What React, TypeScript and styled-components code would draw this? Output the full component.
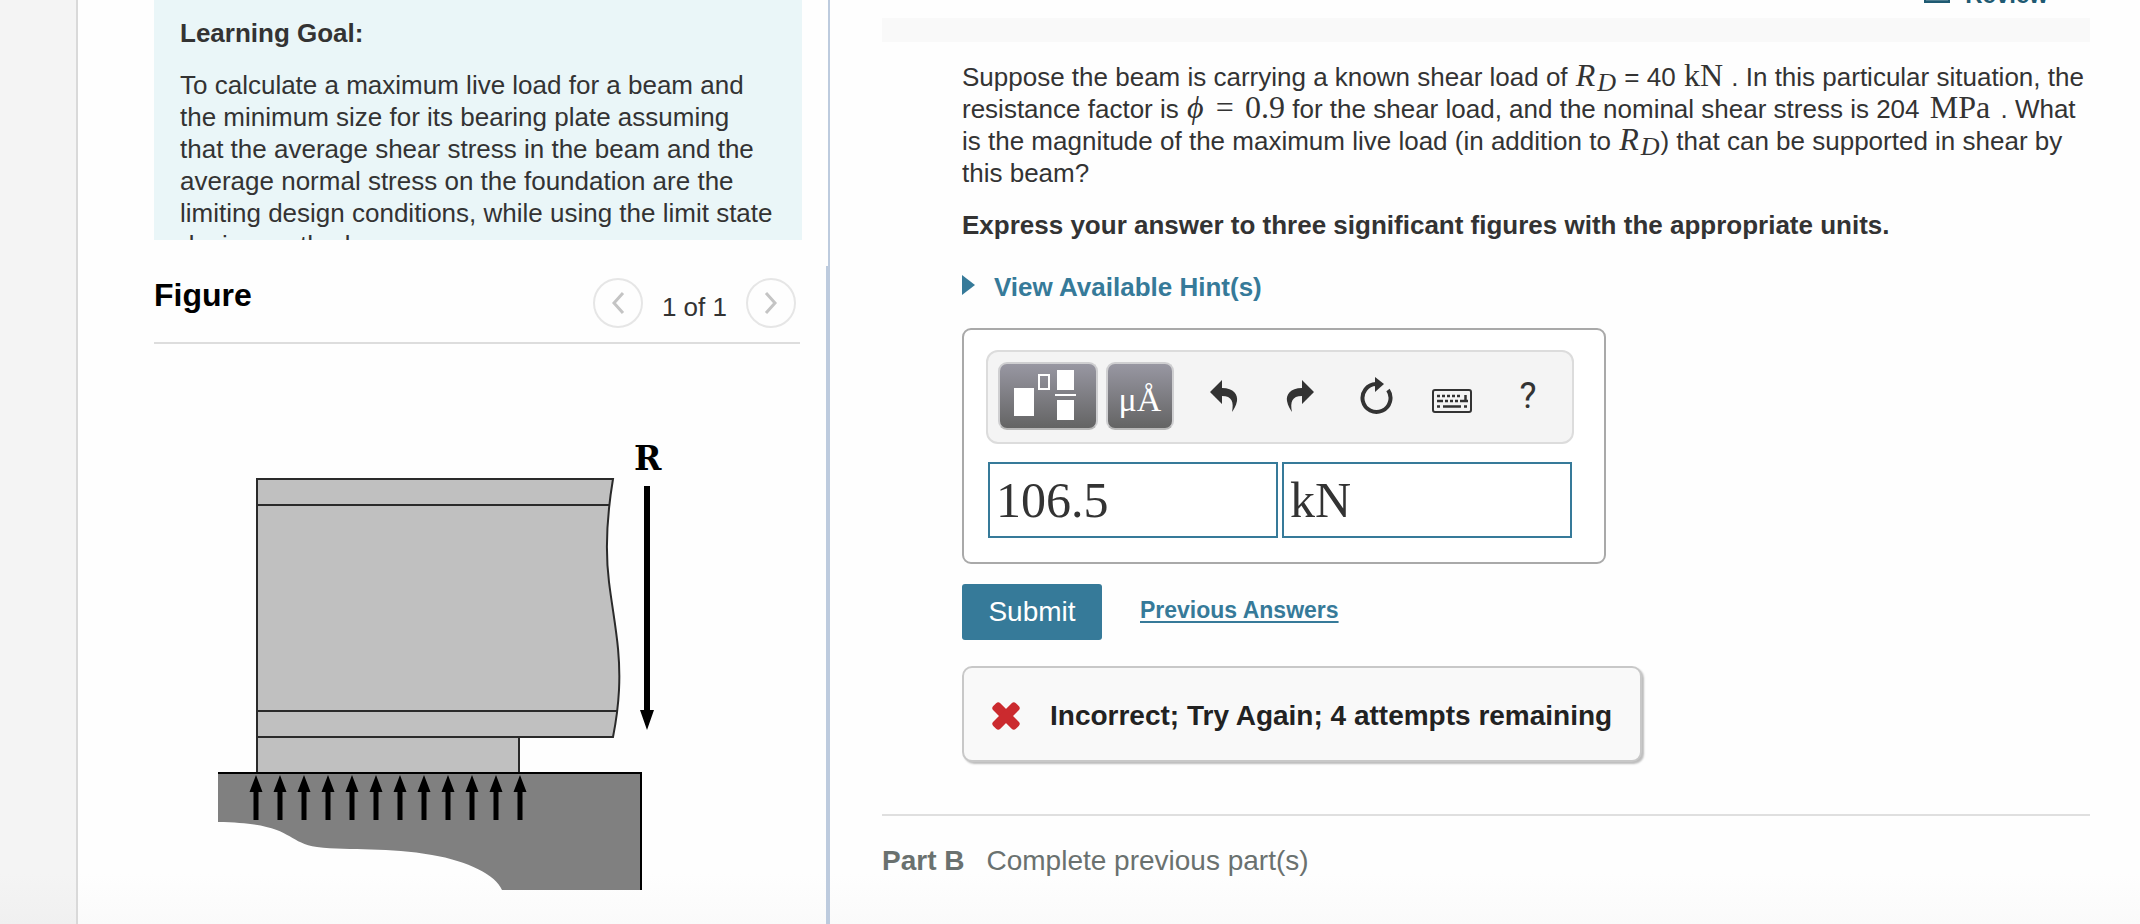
import React, { useState } from 'react';
import styled, { createGlobalStyle } from 'styled-components';

const sans = '"Liberation Sans", Arial, Helvetica, sans-serif';
const serif = '"Liberation Serif", "Times New Roman", serif';
const teal = '#367a99';
const ink = '#333333';
const divider = '#bdcbde';

const GlobalStyle = createGlobalStyle`
  *, *::before, *::after { box-sizing: border-box; }
  html, body { margin: 0; height: 100%; overflow: hidden; }
  body { background: #fefefe; color: ${ink}; font: 26px/32px ${sans}; }
  #root { height: 100%; }
  p, h2, h3 { margin: 0; }
  button { font: inherit; cursor: pointer; }
`;

const Page = styled.div`
  display: flex;
  height: 100vh;
  background: linear-gradient(to top, #fafafa, #fefefe 50px);
`;

const Gutter = styled.div`
  flex: 0 0 78px;
  background: rgba(0, 0, 0, 0.04);
  border-right: 2px solid #d9d9d9;
`;

const LeftPane = styled.aside`
  flex: 0 0 752px;
  display: flex;
  flex-direction: column;
  overflow: hidden;
`;

const GoalArea = styled.div`
  flex: 0 0 266px;
  padding: 0 26px 0 76px;
  border-right: 2px solid ${divider};
`;

const GoalBox = styled.section`
  height: 240px;
  padding: 17px 26px 0;
  overflow: hidden;
  background: #eaf6f8;
`;

const Heading = styled.h2`
  margin-bottom: 20px;
  font-size: 26px;
  line-height: 32px;
`;

const FigureArea = styled.section`
  flex: 1;
  padding: 12px 26px 0 76px;
  border-right: 4px solid ${divider};
`;

const FigureHeader = styled.header`
  display: flex;
  justify-content: space-between;
  height: 66px;
  padding-right: 4px;
  border-bottom: 2px solid #dddddd;
`;

const FigureTitle = styled.h2`
  color: #000;
  font-size: 32px;
  line-height: 34px;
`;

const Pager = styled.nav`
  display: flex;
  gap: 19px;
  height: 50px;
`;

const PagerLabel = styled.span`
  padding-top: 13px;
`;

const PagerButton = styled.button`
  display: grid;
  place-items: center;
  width: 50px;
  height: 50px;
  padding: 0;
  border: 2px solid #e6e6e6;
  border-radius: 50%;
  background: transparent;
`;

const Drawing = styled.svg`
  display: block;
  width: 448px;
  height: 460px;
  margin: 86px 0 0 64px;
`;

const RightPane = styled.main`
  flex: 1;
  min-width: 0;
  padding: 0 50px 0 52px;
`;

const TopBar = styled.div`
  display: flex;
  justify-content: flex-end;
  height: 18px;
  padding-right: 42px;
  overflow: hidden;
`;

const ReviewLink = styled.a`
  display: flex;
  gap: 15px;
  margin-top: -21px;
  height: 32px;
  color: #1f5a72;
  font-size: 24px;
  font-weight: bold;
  text-decoration: none;
`;

const Band = styled.div`
  height: 24px;
  background: #f9f9f9;
`;

const Problem = styled.div`
  display: flex;
  flex-direction: column;
  align-items: flex-start;
  padding: 19px 0 52px 80px;
  border-bottom: 2px solid #dfdfdf;
`;

const Statement = styled.p`
  margin-bottom: 20px;
`;

const Instruction = styled.p`
  margin-bottom: 30px;
  font-weight: bold;
`;

const MathText = styled.span<{ $italic?: boolean; $space?: number }>`
  margin: 0 ${(p) => p.$space ?? 0}px;
  font-family: ${serif};
  font-size: 32px;
  line-height: 0;
  font-style: ${(p) => (p.$italic ? 'italic' : 'normal')};
`;

const Subscript = styled.sub`
  margin-left: 2px;
  font-size: 26px;
  line-height: 0;
  vertical-align: -5px;
`;

const HintButton = styled.button`
  display: flex;
  align-items: center;
  gap: 19px;
  margin-bottom: 25px;
  padding: 0;
  border: 0;
  background: none;
  color: ${teal};
  font-weight: bold;
`;

const HintArrow = styled.span`
  margin-top: -4px;
  border: solid transparent;
  border-width: 10px 0 10px 13px;
  border-left-color: ${teal};
`;

const AnswerBox = styled.form`
  width: 644px;
  margin-bottom: 20px;
  padding: 20px 30px 24px 22px;
  border: 2px solid #a9a9a9;
  border-radius: 9px;
  background: #fff;
`;

const Toolbar = styled.div`
  display: flex;
  align-items: center;
  height: 94px;
  margin-bottom: 18px;
  padding: 0 6px 2px 10px;
  border: 2px solid #dcdcdc;
  border-radius: 12px;
  background: #f4f4f4;
`;

const PaletteButton = styled.button<{ $wide?: boolean }>`
  display: grid;
  place-items: center;
  width: ${(p) => (p.$wide ? 100 : 68)}px;
  height: 68px;
  margin-right: ${(p) => (p.$wide ? 8 : 12)}px;
  padding: 0;
  border: 2px solid #cfcfd1;
  border-bottom-color: #b9b9b9;
  border-radius: 9px;
  background: linear-gradient(#9897a2, #646464);
  color: #fff;
`;

const UnitGlyphs = styled.span`
  padding-top: 8px;
  font: 34px/40px ${serif};
`;

const ToolButton = styled.button`
  display: grid;
  place-items: center;
  flex: 1;
  height: 68px;
  padding: 0;
  border: 0;
  background: none;
  color: ${ink};
`;

const HelpButton = styled(ToolButton)`
  font-family: Roboto, sans-serif;
  font-size: 36px;
`;

const Fields = styled.div`
  display: grid;
  grid-template-columns: 1fr 1fr;
  gap: 4px;
  padding: 0 2px;
`;

const Field = styled.input`
  width: 100%;
  min-width: 0;
  height: 76px;
  padding: 0 0 0 6px;
  border: 2px solid ${teal};
  border-radius: 0;
  background: #fff;
  color: ${ink};
  font: 50px/70px ${serif};
  outline: none;
`;

const Actions = styled.div`
  display: flex;
  align-items: center;
  gap: 38px;
  margin-bottom: 26px;
`;

const SubmitButton = styled.button`
  width: 140px;
  height: 56px;
  padding: 0;
  border: 0;
  border-radius: 3px;
  background: ${teal};
  color: #fff;
  font-size: 28px;
`;

const AnswersLink = styled.a`
  margin-bottom: 4px;
  color: ${teal};
  font-size: 23px;
  font-weight: bold;
  text-decoration-thickness: 2px;
  text-underline-offset: 3px;
`;

const Feedback = styled.div`
  display: flex;
  align-items: center;
  gap: 30px;
  height: 96px;
  padding: 4px 28px 0;
  border: 2px solid #c8c8c8;
  border-radius: 10px;
  background: #f9f9f9;
  box-shadow: 2px 2px 2px #bdbdbd;
  color: #222;
  font-size: 28px;
  font-weight: bold;
`;

const NextPart = styled.section`
  display: flex;
  gap: 22px;
  padding-top: 28px;
  color: #6a716f;
  font-size: 28px;
  line-height: 34px;
`;

const NextTitle = styled.h3`
  font-size: 28px;
`;

function Chevron({ flip }: { flip?: boolean }) {
  return (
    <svg width="14" height="24" viewBox="0 0 14 24" fill="none" stroke="#c4c4c4" strokeWidth="3">
      <path d={flip ? 'M2 2l9 10-9 10' : 'M12 2L3 12l9 10'} />
    </svg>
  );
}

function BeamFigure() {
  const arrows = Array.from({ length: 12 }, (_, i) => 256 + i * 24);
  return (
    <Drawing viewBox="218 430 448 460" role="img" aria-label="Beam resting on a bearing plate">
      <path
        d="M218 773H641V890H502C496 875 468 861 432 855C390 847 350 851 317 847C284 842 294 823 218 822Z"
        fill="#808080"
      />
      <path
        d="M257 479H613C607 515 605 550 609 582C614 622 621 650 619 690C618 710 616 722 613 737H257Z"
        fill="#c0c0c0"
      />
      <path d="M257 737H519V773H257Z" fill="#c0c0c0" />
      <g fill="none" stroke="#2a2a2a" strokeWidth="2">
        <path d="M257 773V479H613C607 515 605 550 609 582C614 622 621 650 619 690C618 710 616 722 613 737H257" />
        <path d="M257 505H609M257 711H617M519 737V773" />
        <path d="M218 773H641V890" stroke="#000" />
      </g>
      {arrows.map((x) => (
        <path key={x} d={`M${x} 775l6.500 17h-4v28h-5v-28h-4z`} fill="#000" />
      ))}
      <path d="M644 486h6v224h4l-7 20l-7-20h4z" fill="#000" />
      <text x="634" y="470" fontFamily='"DejaVu Serif", serif' fontSize="33" fontWeight="bold">
        R
      </text>
    </Drawing>
  );
}

function TemplateIcon() {
  return (
    <svg width="68" height="52" viewBox="0 0 68 52" fill="#fff">
      <path d="M0 18h20v28H0zM43 0h17v20H43zM43 30h17v20H43zM41 24h21v2H41z" />
      <path d="M25 5h10v14H25z" fill="none" stroke="#fff" strokeWidth="2" />
    </svg>
  );
}

function ArrowIcon({ flip }: { flip?: boolean }) {
  return (
    <svg width="28" height="32" viewBox="0 0 28 32" fill="currentColor">
      <path
        transform={flip ? 'matrix(-1 0 0 1 28 0)' : undefined}
        d="M0 12L12 0V8C24 8 28 15 27 21C26 26 24 29 22 32C24 22 22 16 12 16V24Z"
      />
    </svg>
  );
}

function ResetIcon() {
  return (
    <svg width="34" height="38" viewBox="0 0 34 38">
      <path d="M17 7a14 14 0 1 0 12 6" fill="none" stroke="currentColor" strokeWidth="4" />
      <path d="M16 0l9 7-9 8z" fill="currentColor" />
    </svg>
  );
}

function KeyboardIcon() {
  return (
    <svg width="40" height="34" viewBox="0 -10 40 34" fill="none" stroke="currentColor">
      <rect x="1" y="1" width="38" height="22" rx="2" strokeWidth="2" />
      <path
        d="M5 7h3m2 0h3m2 0h3m2 0h3m2 0h3M5 12h6m2 0h3m2 0h3m2 0h3m2 0h8M33.500 6v7M5 17.500h3m3 0h18m3 0h3"
        strokeWidth="2.500"
      />
    </svg>
  );
}

function CrossIcon() {
  return (
    <svg width="28" height="28" viewBox="-14 -14 28 28" fill="#cb2a2e">
      <rect x="-16" y="-5" width="32" height="10" rx="3" transform="rotate(45)" />
      <rect x="-16" y="-5" width="32" height="10" rx="3" transform="rotate(-45)" />
    </svg>
  );
}

function ReviewIcon() {
  return (
    <svg width="26" height="28" viewBox="0 0 26 28">
      <path d="M1 2h24v21H1z" fill="#4d7c8f" stroke="#1f5a72" strokeWidth="2" />
    </svg>
  );
}

function DeadLoad() {
  return (
    <MathText $italic $space={1}>
      R<Subscript>D</Subscript>
    </MathText>
  );
}

export default function App() {
  const [value, setValue] = useState('106.5');
  const [unit, setUnit] = useState('kN');

  return (
    <>
      <GlobalStyle />
      <Page>
        <Gutter />
        <LeftPane>
          <GoalArea>
            <GoalBox>
              <Heading>Learning Goal:</Heading>
              <p>
                To calculate a maximum live load for a beam and the minimum size for its bearing plate
                assuming that the average shear stress in the beam and the average normal stress on
                the foundation are the limiting design conditions, while using the limit state design
                method.
              </p>
            </GoalBox>
          </GoalArea>
          <FigureArea>
            <FigureHeader>
              <FigureTitle>Figure</FigureTitle>
              <Pager aria-label="Figure pages">
                <PagerButton type="button" aria-label="Previous figure">
                  <Chevron />
                </PagerButton>
                <PagerLabel>1 of 1</PagerLabel>
                <PagerButton type="button" aria-label="Next figure">
                  <Chevron flip />
                </PagerButton>
              </Pager>
            </FigureHeader>
            <BeamFigure />
          </FigureArea>
        </LeftPane>
        <RightPane>
          <TopBar>
            <ReviewLink href="#review">
              <ReviewIcon />
              Review
            </ReviewLink>
          </TopBar>
          <Band />
          <Problem>
            <Statement>
              Suppose the beam is carrying a known shear load of <DeadLoad /> = 40{' '}
              <MathText $space={1}>kN</MathText> . In this particular situation, the resistance factor
              is{' '}
              <MathText $italic $space={1}>
                ϕ
              </MathText>{' '}
              <MathText $space={4}>=</MathText> <MathText>0.9</MathText> for the shear load, and the
              nominal shear stress is 204 <MathText $space={3}>MPa</MathText> . What is the magnitude
              of the maximum live load (in addition to <DeadLoad />) that can be supported in shear by
              this beam?
            </Statement>
            <Instruction>
              Express your answer to three significant figures with the appropriate units.
            </Instruction>
            <HintButton type="button">
              <HintArrow />
              View Available Hint(s)
            </HintButton>
            <AnswerBox onSubmit={(e) => e.preventDefault()} id="answer">
              <Toolbar role="toolbar" aria-label="Math input">
                <PaletteButton type="button" $wide aria-label="Templates">
                  <TemplateIcon />
                </PaletteButton>
                <PaletteButton type="button" aria-label="Units">
                  <UnitGlyphs>μÅ</UnitGlyphs>
                </PaletteButton>
                <ToolButton type="button" aria-label="Undo">
                  <ArrowIcon />
                </ToolButton>
                <ToolButton type="button" aria-label="Redo">
                  <ArrowIcon flip />
                </ToolButton>
                <ToolButton type="button" aria-label="Reset">
                  <ResetIcon />
                </ToolButton>
                <ToolButton type="button" aria-label="Keyboard shortcuts">
                  <KeyboardIcon />
                </ToolButton>
                <HelpButton type="button" aria-label="Help">
                  ?
                </HelpButton>
              </Toolbar>
              <Fields>
                <Field aria-label="Value" value={value} onChange={(e) => setValue(e.target.value)} />
                <Field aria-label="Units" value={unit} onChange={(e) => setUnit(e.target.value)} />
              </Fields>
            </AnswerBox>
            <Actions>
              <SubmitButton type="submit" form="answer">
                Submit
              </SubmitButton>
              <AnswersLink href="#previous">Previous Answers</AnswersLink>
            </Actions>
            <Feedback role="status">
              <CrossIcon />
              Incorrect; Try Again; 4 attempts remaining
            </Feedback>
          </Problem>
          <NextPart>
            <NextTitle>Part B</NextTitle>
            <span>Complete previous part(s)</span>
          </NextPart>
        </RightPane>
      </Page>
    </>
  );
}
